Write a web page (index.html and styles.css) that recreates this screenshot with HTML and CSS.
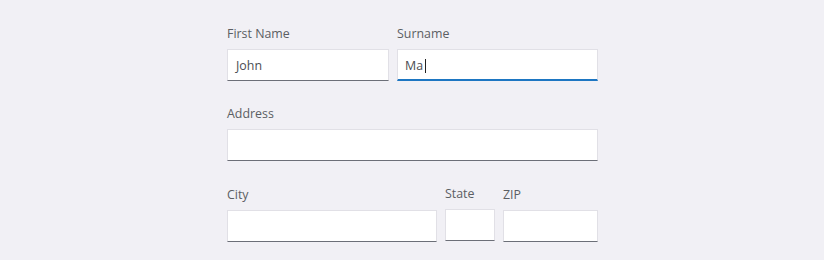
FILE: index.html
```html
<!DOCTYPE html>
<html lang="en">
<head>
<meta charset="utf-8">
<title>Address form</title>
<link rel="stylesheet" href="styles.css">
</head>
<body>
<form class="form">
  <div class="row">
    <div class="field w-first">
      <div class="label">First Name</div>
      <div class="input"><span class="value">John</span></div>
    </div>
    <div class="field w-surname">
      <div class="label">Surname</div>
      <div class="input focused"><span class="value">Ma</span><span class="caret"></span></div>
    </div>
  </div>
  <div class="row">
    <div class="field w-full">
      <div class="label">Address</div>
      <div class="input"></div>
    </div>
  </div>
  <div class="row row-last">
    <div class="field w-city">
      <div class="label">City</div>
      <div class="input"></div>
    </div>
    <div class="field w-state up">
      <div class="label">State</div>
      <div class="input"></div>
    </div>
    <div class="field w-zip">
      <div class="label">ZIP</div>
      <div class="input"></div>
    </div>
  </div>
</form>
</body>
</html>
```
FILE: styles.css
```css
html, body {
  margin: 0;
  padding: 0;
  background: #f1f0f5;
}
body {
  font-family: "Open Sans", "Noto Sans", sans-serif;
  font-size: 12.4px;
  color: #32363a;
}
.form {
  width: 371px;
  margin-left: 227px;
  padding-top: 25px;
  display: flex;
  flex-direction: column;
  gap: 16px;
}
.row {
  display: flex;
  gap: 8px;
  height: 64px;
}
.row-last {
  padding-top: 1px;
}
.field {
  display: flex;
  flex-direction: column;
}
.up {
  margin-top: -1px;
}
.label {
  height: 18px;
  line-height: 18px;
  color: #5b5e63;
  margin-bottom: 6px;
  white-space: nowrap;
}
.input {
  box-sizing: border-box;
  height: 32px;
  background: #fff;
  border: 1px solid #e1e0e6;
  border-bottom-color: #6c6f78;
  display: flex;
  align-items: center;
  padding: 1px 8px 0;
  position: relative;
}
.input.focused {
  border-bottom: 2px solid #1d76c2;
  padding-left: 7px;
  padding-top: 2px;
}
.value {
  color: #4a4d52;
  line-height: 18px;
}
.caret {
  display: inline-block;
  width: 1px;
  height: 14px;
  background: #222;
  margin-left: 2px;
}
.w-first { width: 162px; }
.w-surname { width: 201px; }
.w-full { width: 371px; }
.w-city { width: 210px; }
.w-state { width: 50px; }
.w-zip { width: 95px; }
```
